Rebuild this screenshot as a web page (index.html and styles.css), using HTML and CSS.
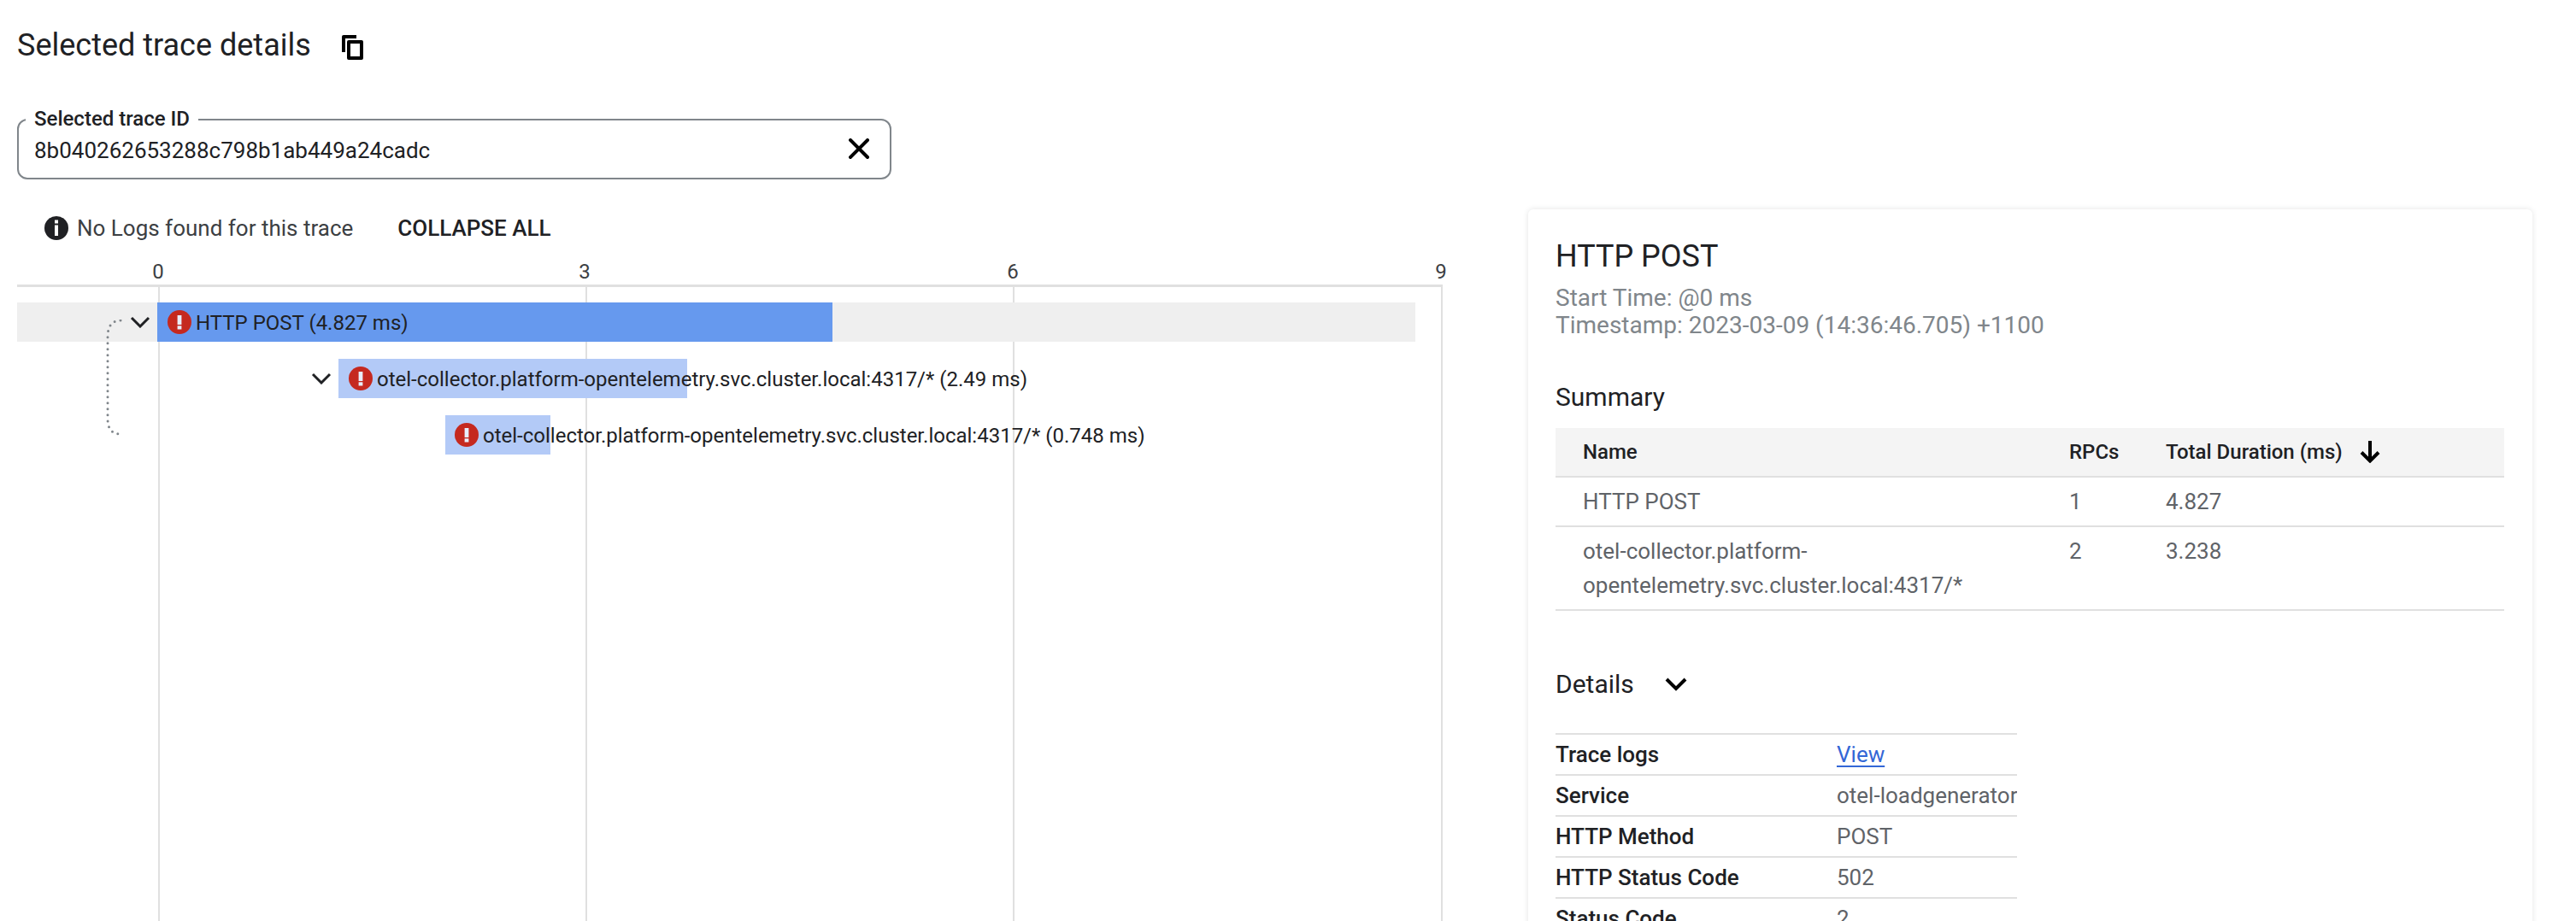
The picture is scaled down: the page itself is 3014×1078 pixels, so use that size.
FILE: index.html
```html
<!DOCTYPE html>
<html lang="en">
<head>
<meta charset="utf-8">
<title>Selected trace details</title>
<link rel="stylesheet" href="styles.css">
</head>
<body>
<main class="page">
  <section class="left">
    <header class="title-row">
      <h1 class="title">Selected trace details</h1>
      <svg class="copy-icon" viewBox="0 0 25 29"><path fill-rule="evenodd" d="M2 0H17V4H4V20H0V2A2 2 0 0 1 2 0zM8 6H23A2 2 0 0 1 25 8V27A2 2 0 0 1 23 29H8A2 2 0 0 1 6 27V8A2 2 0 0 1 8 6zM10 10V25H21V10z"/></svg>
    </header>
    <div class="field">
      <span class="field-label">Selected trace ID</span>
      <span class="field-value">8b040262653288c798b1ab449a24cadc</span>
      <svg class="close-icon" viewBox="0 0 24 24"><path d="M2 2L22 22M22 2L2 22"/></svg>
    </div>
    <div class="notice-row">
      <svg class="info-icon" viewBox="0 0 28 28"><circle class="info-disc" cx="14" cy="14" r="14"/><rect class="info-mark" x="12" y="4.500" width="4" height="4"/><rect class="info-mark" x="12" y="10.500" width="4" height="12.500"/></svg>
      <span class="notice">No Logs found for this trace</span>
      <span class="collapse">COLLAPSE ALL</span>
    </div>
    <div class="chart">
      <div class="axis">
        <span class="tick" style="left:165px">0</span>
        <span class="tick" style="left:664px">3</span>
        <span class="tick" style="left:1165px">6</span>
        <span class="tick" style="left:1666px">9</span>
      </div>
      <div class="plot">
        <i class="grid" style="left:165px"></i>
        <i class="grid" style="left:665px"></i>
        <i class="grid" style="left:1165px"></i>
        <i class="grid" style="left:1666px"></i>
        <svg class="tree-line" viewBox="0 0 20 136"><path d="M18 1C8 1 3 8 3 20V116C3 128 8 134 18 134"/></svg>
        <div class="span-row is-root">
          <div class="bar bar-root" style="left:164px;width:790px"></div>
          <div class="span-content" style="margin-left:132px">
            <svg class="chevron" viewBox="0 0 24 14"><path d="M2 2L12 12L22 2"/></svg>
            <svg class="error-icon" viewBox="0 0 28 28"><circle cx="14" cy="14" r="14"/><rect class="mark" x="11.600" y="6" width="4.800" height="11"/><rect class="mark" x="11.600" y="18.300" width="4.800" height="4.200"/></svg>
            <span class="span-name">HTTP POST (4.827 ms)</span>
          </div>
        </div>
        <div class="span-row">
          <div class="bar bar-child" style="left:376px;width:408px"></div>
          <div class="span-content" style="margin-left:344px">
            <svg class="chevron" viewBox="0 0 24 14"><path d="M2 2L12 12L22 2"/></svg>
            <svg class="error-icon" viewBox="0 0 28 28"><circle cx="14" cy="14" r="14"/><rect class="mark" x="11.600" y="6" width="4.800" height="11"/><rect class="mark" x="11.600" y="18.300" width="4.800" height="4.200"/></svg>
            <span class="span-name">otel-collector.platform-opentelemetry.svc.cluster.local:4317/* (2.49 ms)</span>
          </div>
        </div>
        <div class="span-row">
          <div class="bar bar-child" style="left:501px;width:123px"></div>
          <div class="span-content" style="margin-left:512px">
            <svg class="error-icon" viewBox="0 0 28 28"><circle cx="14" cy="14" r="14"/><rect class="mark" x="11.600" y="6" width="4.800" height="11"/><rect class="mark" x="11.600" y="18.300" width="4.800" height="4.200"/></svg>
            <span class="span-name">otel-collector.platform-opentelemetry.svc.cluster.local:4317/* (0.748 ms)</span>
          </div>
        </div>
      </div>
    </div>
  </section>
  <aside class="panel">
    <h2 class="panel-title">HTTP POST</h2>
    <p class="meta">Start Time: @0 ms<br>Timestamp: 2023-03-09 (14:36:46.705) +1100</p>
    <h3 class="section-title summary-title">Summary</h3>
    <table class="summary">
      <thead>
        <tr>
          <th class="col-name">Name</th>
          <th class="col-rpc">RPCs</th>
          <th><span class="sort-head">Total Duration (ms)<svg class="sort-icon" viewBox="0 0 24 26"><path d="M12 0V23M2 13.500L12 23.500L22 13.500"/></svg></span></th>
        </tr>
      </thead>
      <tbody>
        <tr><td>HTTP POST</td><td>1</td><td>4.827</td></tr>
        <tr><td>otel-collector.platform-<br>opentelemetry.svc.cluster.local:4317/*</td><td>2</td><td>3.238</td></tr>
      </tbody>
    </table>
    <div class="details-head">
      <h3 class="section-title">Details</h3>
      <svg class="details-chevron" viewBox="0 0 26 18"><path d="M2 3L13 14L24 3"/></svg>
    </div>
    <dl class="details">
      <div class="detail-row"><dt>Trace logs</dt><dd><a class="link" href="#">View</a></dd></div>
      <div class="detail-row"><dt>Service</dt><dd>otel-loadgenerator</dd></div>
      <div class="detail-row"><dt>HTTP Method</dt><dd>POST</dd></div>
      <div class="detail-row"><dt>HTTP Status Code</dt><dd>502</dd></div>
      <div class="detail-row"><dt>Status Code</dt><dd>2</dd></div>
    </dl>
  </aside>
</main>
</body>
</html>
```
FILE: styles.css
```css
* { box-sizing: border-box; }
html, body { margin: 0; height: 1078px; overflow: hidden; background: #fff; }
body { font-family: Roboto, "Liberation Sans", sans-serif; color: #202124; }
.page { display: flex; height: 1078px; overflow: hidden; }
.left { width: 1788px; flex: none; padding-left: 20px; display: flex; flex-direction: column; }

.title-row { display: flex; align-items: center; height: 106px; }
.title { margin: 0; font-size: 36px; font-weight: 400; line-height: 44px; color: #202124; }
.copy-icon { width: 25px; height: 29px; margin-left: 36px; margin-top: 5px; fill: #000; }

.field { position: relative; width: 1023px; height: 71px; margin-top: 34px; border: 2px solid #80868b; border-radius: 12px; display: flex; align-items: center; justify-content: space-between; padding: 0 24px 0 18px; }
.field-label { position: absolute; left: 8px; top: -16px; padding: 0 10px; background: #fff; font-size: 24px; font-weight: 500; line-height: 28px; }
.field-value { font-size: 26px; line-height: 36px; margin-top: 2px; }
.close-icon { width: 24px; height: 24px; margin-top: -2px; fill: none; stroke: #000; stroke-width: 4; stroke-linecap: square; }

.notice-row { display: flex; align-items: center; height: 28px; margin-top: 43px; padding-left: 32px; }
.info-icon { width: 28px; height: 28px; flex: none; }
.info-disc { fill: #202124; }
.info-mark { fill: #fff; }
.notice { margin-left: 10px; font-size: 26px; color: #3c4043; }
.collapse { margin-left: 52px; font-size: 26px; font-weight: 500; color: #202124; }

.chart { position: relative; flex: 1; margin-top: 18px; }
.axis { position: relative; height: 37px; border-bottom: 3px solid #e0e0e0; width: 1668px; }
.tick { position: absolute; top: 5px; transform: translateX(-50%); font-size: 24px; line-height: 28px; color: #3c4043; }
.plot { position: relative; padding-top: 18px; height: 742px; }
.grid { position: absolute; top: 0; bottom: 0; width: 2px; background: #e0e0e0; }
.tree-line { position: absolute; left: 103px; top: 38px; width: 20px; height: 136px; z-index: 2; fill: none; stroke: #80868b; stroke-width: 3; stroke-dasharray: 0 7; stroke-linecap: round; }

.span-row { position: relative; height: 46px; margin-bottom: 20px; }
.is-root { background: #efefef; width: 1636px; }
.bar { position: absolute; top: 0; bottom: 0; }
.bar-root { background: #6699ee; }
.bar-child { background: #b3caf7; }
.span-content { position: relative; display: flex; align-items: center; height: 46px; }
.chevron { width: 24px; height: 14px; flex: none; margin-right: 20px; fill: none; stroke: #202124; stroke-width: 3; }
.error-icon { width: 28px; height: 28px; flex: none; fill: #c5291f; }
.error-icon .mark { fill: #e8eefc; }
.span-name { margin-left: 5px; margin-top: 2px; font-size: 24px; line-height: 32px; white-space: nowrap; color: #202124; }

.panel { width: 1175px; height: 1100px; flex: none; margin-top: 245px; padding: 33px 32px 0 32px; border-radius: 6px; background: #fff; box-shadow: 0 0 6px rgba(60, 64, 67, .14); overflow: hidden; }
.panel-title { margin: 0; font-size: 36px; font-weight: 400; line-height: 44px; color: #202124; }
.meta { margin: 11px 0 0; font-size: 28px; line-height: 32px; color: #80868b; }
.section-title { margin: 0; font-size: 30px; font-weight: 400; line-height: 40px; color: #202124; }
.summary-title { margin-top: 48px; }
.summary { width: 1110px; margin-top: 16px; border-collapse: collapse; table-layout: fixed; }
.summary th { height: 57px; padding: 0; background: #f4f4f4; border-bottom: 2px solid #e0e0e0; text-align: left; font-size: 24px; font-weight: 500; color: #202124; }
.summary td { padding: 8px 0; border-bottom: 2px solid #e0e0e0; font-size: 26px; line-height: 40px; vertical-align: top; color: #5f6368; }
.summary th:first-child, .summary td:first-child { padding-left: 32px; }
.col-name { width: 601px; }
.col-rpc { width: 113px; }
.sort-head { display: inline-flex; align-items: center; }
.sort-icon { width: 24px; height: 26px; margin-left: 20px; fill: none; stroke: #000; stroke-width: 4; }

.details-head { display: flex; align-items: center; margin-top: 64px; height: 44px; }
.details-chevron { width: 26px; height: 18px; margin-left: 36px; fill: none; stroke: #000; stroke-width: 4; }
.details { width: 540px; margin: 35px 0 0; border-top: 2px solid #e0e0e0; font-size: 26px; }
.detail-row { display: flex; height: 48px; align-items: center; border-bottom: 2px solid #e0e0e0; }
.detail-row dt { width: 329px; flex: none; font-weight: 500; color: #202124; }
.detail-row dd { margin: 0; flex: 1; overflow: hidden; white-space: nowrap; color: #5f6368; }
.link { color: #3367d6; text-decoration: underline; text-underline-offset: 4px; }
```
